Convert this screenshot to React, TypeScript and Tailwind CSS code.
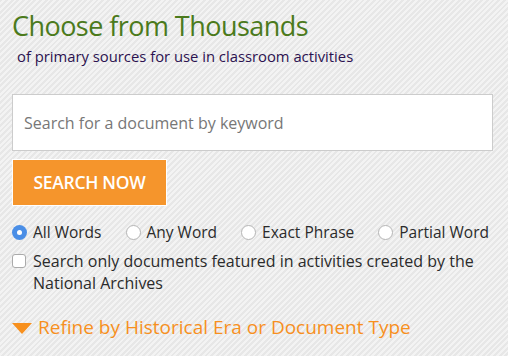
const font = { fontFamily: '"Source Sans Pro", "Open Sans", "Noto Sans", sans-serif' };

function Radio({ label, checked }: { label: string; checked?: boolean }) {
  return (
    <label className="flex items-center gap-[6px]">
      {checked ? (
        <span className="flex h-[15px] w-[15px] items-center justify-center rounded-full bg-[#4a8ee6]">
          <span className="h-[5px] w-[5px] rounded-full bg-white" />
        </span>
      ) : (
        <span className="h-[15px] w-[15px] rounded-full border border-[#b5b5b5] bg-white" />
      )}
      <span>{label}</span>
    </label>
  );
}

export default function App() {
  return (
    <div
      className="h-[356px] w-[508px] overflow-hidden bg-[repeating-linear-gradient(135deg,#e7e7e7_0px,#e7e7e7_2px,#f3f3f3_2px,#f3f3f3_4px)] px-[12px] pt-[8px]"
      style={font}
    >
      <h1 className="text-[27px] leading-[36px] tracking-[-0.55px] text-[#4b7a1c]">Choose from Thousands</h1>
      <p className="ml-[5px] mt-[2px] text-[14.8px] leading-[20px] text-[#2c1250]">of primary sources for use in classroom activities</p>

      <div className="mt-[28px] flex h-[57px] w-[481px] items-center border border-[#cccccc] bg-white px-[11px] text-[16px] text-[#777777]">
        Search for a document by keyword
      </div>

      <button className="mt-[8px] h-[47px] w-[155px] border border-white bg-[#f5952c] text-[17.5px] font-semibold tracking-[-0.3px] text-white">
        SEARCH NOW
      </button>

      <div className="mt-[15px] flex items-center gap-[24px] text-[15.5px] text-[#2b2b2b]">
        <Radio label="All Words" checked />
        <Radio label="Any Word" />
        <Radio label="Exact Phrase" />
        <Radio label="Partial Word" />
      </div>

      <label className="mt-[6px] flex gap-[7px] text-[16px] leading-[22px] text-[#2b2b2b]">
        <span className="mt-[4px] h-[14px] w-[14px] shrink-0 rounded-[3px] border border-[#aaaaaa] bg-white" />
        <span>Search only documents featured in activities created by the National Archives</span>
      </label>

      <div className="mt-[19px] flex items-center gap-[6px] text-[19px] text-[#f7901e]">
        <svg width="20" height="12" viewBox="0 0 20 12" className="mt-[2px]">
          <polygon points="0,0 20,0 10,11" fill="#f7901e" />
        </svg>
        <span>Refine by Historical Era or Document Type</span>
      </div>
    </div>
  );
}
